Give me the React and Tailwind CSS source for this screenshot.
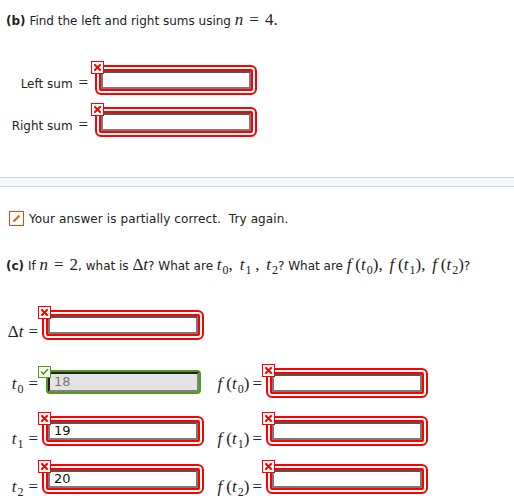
import React from 'react';

// ---------------------------------------------------------------------------
// Small pieces
// ---------------------------------------------------------------------------

const M = "[font-family:'Liberation_Serif',serif] text-[17px] leading-none";

function V({ children, sub }) {
  return (
    <span className={`${M} italic`}>
      {children}
      {sub !== undefined && (
        <span className="inline-block not-italic text-[12px] relative top-[4px] ml-[1px]">{sub}</span>
      )}
    </span>
  );
}

function Eq() {
  return <span className={`${M} mx-[6px]`}>=</span>;
}

function XBadge() {
  return (
    <span className="absolute -left-[4px] -top-[4px] w-[13px] h-[13px] bg-white border border-[#ff0000] flex items-center justify-center">
      <svg width="7" height="7" viewBox="0 0 7 7">
        <path d="M1 1L6 6M6 1L1 6" stroke="#ff0000" strokeWidth="2" strokeLinecap="square" />
      </svg>
    </span>
  );
}

function CheckBadge() {
  return (
    <span className="absolute -left-[4px] -top-[4px] w-[13px] h-[12px] bg-white border border-[#4f9a16] flex items-center justify-center">
      <svg width="9" height="7" viewBox="0 0 9 7">
        <path d="M1 3.5L3.5 6L8 1" fill="none" stroke="#4f9a16" strokeWidth="1.6" />
      </svg>
    </span>
  );
}

function RedBox({ value }) {
  return (
    <div className="relative w-[162px] h-[30px] shrink-0">
      <div className="w-full h-full border-[6px] border-double border-[#ff0000] rounded-[6px] bg-white">
        <div className="h-full border-2 border-[#7a7a7a] border-t-[#555] bg-white px-[4px] text-[13px] leading-[14px] text-[#111]">
          {value}
        </div>
      </div>
      <XBadge />
    </div>
  );
}

function GreenBox({ value }) {
  return (
    <div className="relative w-[162px] h-[30px] shrink-0">
      <div className="ml-[4px] mt-[3px] w-[155px] h-[24px] border-2 border-[#4f9a16] rounded-[4px]">
        <div className="h-full border-2 border-[#808080] border-t-[#222] border-l-[#222] bg-[#e3e3e3] px-[4px] text-[13px] leading-[16px] text-[#777]">
          {value}
        </div>
      </div>
      <CheckBadge />
    </div>
  );
}

function TRow({ sub, value, ok, dy }) {
  return (
    <div className="flex items-center h-[30px]">
      <span className="w-[38px] text-right relative whitespace-nowrap" style={{ top: dy }}>
        <V sub={sub}>t</V>
        <span className={`${M} ml-[5px]`}>=</span>
      </span>
      <div className="ml-[4px]">{ok ? <GreenBox value={value} /> : <RedBox value={value} />}</div>
      <span className="ml-[5px] w-[53px] text-right relative whitespace-nowrap" style={{ top: dy }}>
        <V>f</V>
        <span className={`${M} ml-[4px]`}>(</span>
        <V sub={sub}>t</V>
        <span className={M}>)</span>
        <span className={`${M} ml-[3px]`}>=</span>
      </span>
      <div className="ml-[4px]">
        <RedBox />
      </div>
    </div>
  );
}

// ---------------------------------------------------------------------------
// Page
// ---------------------------------------------------------------------------

export default function App() {
  return (
    <div className="w-[514px] h-[504px] overflow-hidden bg-white text-[#222] text-[12px] [font-family:'DejaVu_Sans',Verdana,sans-serif]">
      {/* (b) */}
      <div className="h-[40px] flex items-center pl-[6px] whitespace-nowrap">
        <span>
          <b>(b)</b> Find the left and right sums using <V>n</V>
          <Eq />
          <span className={M}>4.</span>
        </span>
      </div>

      <div className="mt-[25px] flex items-center h-[30px]">
        <span className="w-[88px] text-right relative top-[3px] whitespace-nowrap">
          Left sum <span className={`${M} ml-[2px]`}>=</span>
        </span>
        <div className="ml-[7px]">
          <RedBox />
        </div>
      </div>
      <div className="mt-[12px] flex items-center h-[30px]">
        <span className="w-[88px] text-right relative top-[3px] whitespace-nowrap">
          Right sum <span className={`${M} ml-[2px]`}>=</span>
        </span>
        <div className="ml-[7px]">
          <RedBox />
        </div>
      </div>

      {/* separator */}
      <div className="mt-[40px] h-[10px] bg-[#f4f8fb] border-y border-[#c9d6e2]" />

      {/* feedback */}
      <div className="mt-[24px] h-[15px] flex items-center pl-[9px]">
        <span className="w-[15px] h-[15px] border-[1.5px] border-[#e2471b] bg-white flex items-center justify-center">
          <svg width="9" height="9" viewBox="0 0 9 9">
            <path d="M1.5 7.5L7.5 1.5" stroke="#e8581f" strokeWidth="2" />
          </svg>
        </span>
        <span className="ml-[5px] whitespace-pre tracking-[0.1px]">Your answer is partially correct.  Try again.</span>
      </div>

      {/* (c) */}
      <div className="mt-[31px] h-[16px] flex items-center pl-[6px] whitespace-nowrap">
        <span>
          <b>(c)</b> If <V>n</V>
          <Eq />
          <span className={M}>2</span>, what is <span className={M}>Δ</span>
          <V>t</V>? What are <V sub="0">t</V>
          <span className={`${M} mr-[3px]`}>,</span> <V sub="1">t</V> <span className={`${M} mr-[3px]`}>,</span>{' '}
          <V sub="2">t</V>? What are <V>f</V> <span className={M}>(</span>
          <V sub="0">t</V>
          <span className={`${M} mr-[3px]`}>),</span> <V>f</V> <span className={M}>(</span>
          <V sub="1">t</V>
          <span className={`${M} mr-[3px]`}>),</span> <V>f</V> <span className={M}>(</span>
          <V sub="2">t</V>
          <span className={M}>)</span>?
        </span>
      </div>

      {/* Δt */}
      <div className="mt-[37px] flex items-center h-[30px]">
        <span className="w-[38px] text-right relative top-[7px] whitespace-nowrap">
          <span className={M}>Δ</span>
          <V>t</V>
          <span className={`${M} ml-[5px]`}>=</span>
        </span>
        <div className="ml-[4px]">
          <RedBox />
        </div>
      </div>

      <div className="mt-[28px]">
        <TRow sub="0" value="18" ok dy={1} />
      </div>
      <div className="mt-[18px]">
        <TRow sub="1" value="19" dy={8} />
      </div>
      <div className="mt-[18px]">
        <TRow sub="2" value="20" dy={8} />
      </div>
    </div>
  );
}
